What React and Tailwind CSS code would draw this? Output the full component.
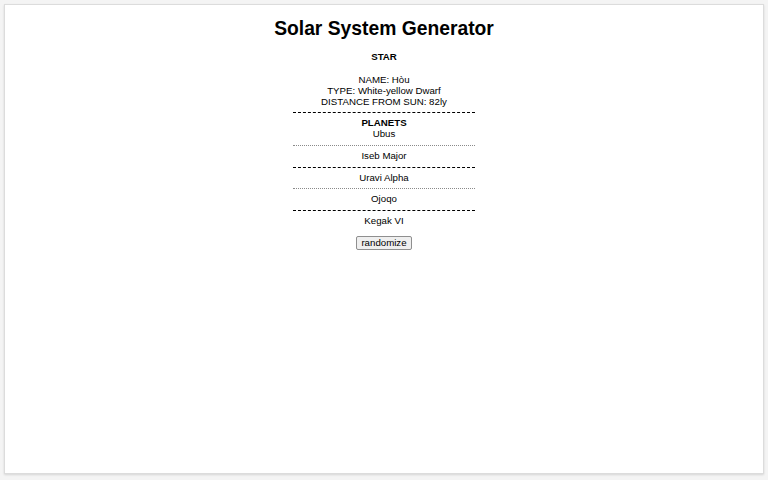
export default function App() {
  const planets = ["Ubus", "Iseb Major", "Uravi Alpha", "Ojoqo", "Kegak VI"];
  return (
    <div className="w-[768px] h-[480px] bg-[#f4f4f4] p-[4px] overflow-hidden" style={{ fontFamily: '"Liberation Sans", Arial, sans-serif' }}>
      <div className="h-[470px] bg-white border border-[#dcdcdc] shadow-[0_1px_2px_rgba(0,0,0,0.12)] flex flex-col items-center text-black">
        <h1 className="mt-[12px] text-[19.3px] leading-[24px] font-bold">Solar System Generator</h1>
        <div className="mt-[10px] w-[182px] text-center text-[9.7px] leading-[11px]">
          <div className="font-bold text-[9.7px]">STAR</div>
          <div className="mt-[12px] pb-[5px] border-b border-dashed border-black">
            <div>NAME: Hòu</div>
            <div>TYPE: White-yellow Dwarf</div>
            <div>DISTANCE FROM SUN: 82ly</div>
          </div>
          <div className="pt-[4px] font-bold text-[9.7px] leading-[11px]">PLANETS</div>
          <ul>
            {planets.map((p, i) => (
              <li
                key={p}
                className={
                  (i === 0 ? "pt-0 pb-[6px] " : "pt-[4px] pb-[5.5px] ") +
                  "leading-[11px] " +
                  (i === 4 ? "" : i % 2 === 0 ? "border-b border-dotted border-[#8a8a8a]" : "border-b border-dashed border-black")
                }
              >
                {p}
              </li>
            ))}
          </ul>
        </div>
        <button className="mt-[5px] h-[14px] px-[4px] text-[9.7px] leading-[12px] bg-[#efefef] border border-[#8f8f8f] rounded-[2px] text-black">
          randomize
        </button>
      </div>
    </div>
  );
}
